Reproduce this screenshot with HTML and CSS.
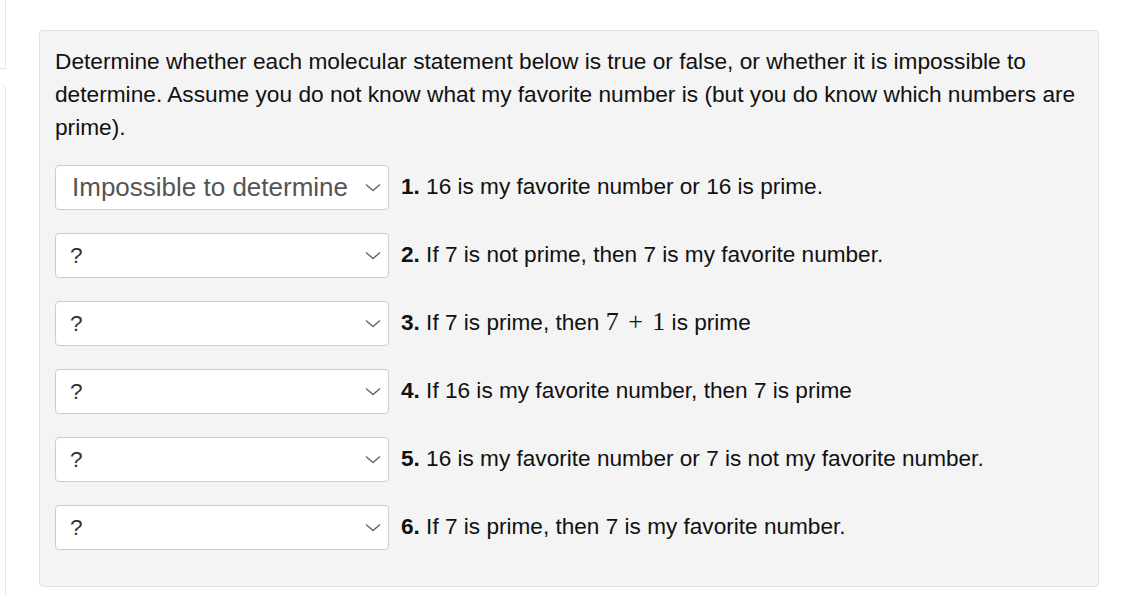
FILE: index.html
```html
<!DOCTYPE html>
<html lang="en">
<head>
    <meta charset="UTF-8">
    <meta name="viewport" content="width=device-width, initial-scale=1.0">
    <title>Molecular Statements</title>
    <link rel="stylesheet" href="styles.css">
</head>
<body>
    <div class="page">
        <!-- Sidebar edge stubs -->
        <div class="sidebar">
            <div class="side-top"></div>
            <div class="side-panel"></div>
        </div>

        <!-- Question card -->
        <div class="main">
            <div class="question-card">
                <p class="prompt">Determine whether each molecular statement below is true or false, or whether it is impossible to determine. Assume you do not know what my favorite number is (but you do know which numbers are prime).</p>

                <div class="statements">
                    <div class="statement-row">
                        <div class="select-box answered">
                            <span class="select-value">Impossible to determine</span>
                            <svg class="chevron" width="16" height="9" viewBox="0 0 16 9"><path d="M1 1.5 L8 7.5 L15 1.5" fill="none" stroke="#666" stroke-width="1.4"/></svg>
                        </div>
                        <div class="statement"><b>1.</b> 16 is my favorite number or 16 is prime.</div>
                    </div>

                    <div class="statement-row">
                        <div class="select-box">
                            <span class="select-value">?</span>
                            <svg class="chevron" width="16" height="9" viewBox="0 0 16 9"><path d="M1 1.5 L8 7.5 L15 1.5" fill="none" stroke="#666" stroke-width="1.4"/></svg>
                        </div>
                        <div class="statement"><b>2.</b> If 7 is not prime, then 7 is my favorite number.</div>
                    </div>

                    <div class="statement-row">
                        <div class="select-box">
                            <span class="select-value">?</span>
                            <svg class="chevron" width="16" height="9" viewBox="0 0 16 9"><path d="M1 1.5 L8 7.5 L15 1.5" fill="none" stroke="#666" stroke-width="1.4"/></svg>
                        </div>
                        <div class="statement"><b>3.</b> If 7 is prime, then <span class="math">7 + 1</span> is prime</div>
                    </div>

                    <div class="statement-row">
                        <div class="select-box">
                            <span class="select-value">?</span>
                            <svg class="chevron" width="16" height="9" viewBox="0 0 16 9"><path d="M1 1.5 L8 7.5 L15 1.5" fill="none" stroke="#666" stroke-width="1.4"/></svg>
                        </div>
                        <div class="statement"><b>4.</b> If 16 is my favorite number, then 7 is prime</div>
                    </div>

                    <div class="statement-row">
                        <div class="select-box">
                            <span class="select-value">?</span>
                            <svg class="chevron" width="16" height="9" viewBox="0 0 16 9"><path d="M1 1.5 L8 7.5 L15 1.5" fill="none" stroke="#666" stroke-width="1.4"/></svg>
                        </div>
                        <div class="statement"><b>5.</b> 16 is my favorite number or 7 is not my favorite number.</div>
                    </div>

                    <div class="statement-row">
                        <div class="select-box">
                            <span class="select-value">?</span>
                            <svg class="chevron" width="16" height="9" viewBox="0 0 16 9"><path d="M1 1.5 L8 7.5 L15 1.5" fill="none" stroke="#666" stroke-width="1.4"/></svg>
                        </div>
                        <div class="statement"><b>6.</b> If 7 is prime, then 7 is my favorite number.</div>
                    </div>
                </div>
            </div>
        </div>
    </div>
</body>
</html>
```

FILE: styles.css
```css
* {
    margin: 0;
    padding: 0;
    box-sizing: border-box;
}

body {
    background-color: #ffffff;
    font-family: 'Liberation Sans', Arial, Helvetica, sans-serif;
    color: #111;
    overflow: hidden;
}

.page {
    display: flex;
    height: 595px;
}

/* Edges of the neighbouring panels */
.sidebar {
    width: 6px;
    flex-shrink: 0;
    display: flex;
    flex-direction: column;
}

.side-top {
    height: 69px;
    border-right: 1px solid #e6e6e6;
    border-bottom: 1px solid #e6e6e6;
}

.side-panel {
    flex: 1;
    margin-top: 14px;
    border-right: 1px solid #e6e6e6;
    border-top: 1px solid #ececec;
    border-top-right-radius: 8px;
}

.main {
    padding: 30px 0 0 33px;
}

.question-card {
    width: 1060px;
    background-color: #f4f4f4;
    border: 1px solid #e1e1e1;
    border-radius: 4px;
    padding: 14px 20px 36px 15px;
}

.prompt {
    font-size: 22.7px;
    line-height: 33px;
    margin-bottom: 21px;
}

.statements {
    display: flex;
    flex-direction: column;
    gap: 23px;
}

.statement-row {
    display: flex;
    align-items: center;
    gap: 12px;
}

.select-box {
    width: 334px;
    height: 45px;
    flex-shrink: 0;
    display: flex;
    align-items: center;
    justify-content: space-between;
    padding: 0 7px 0 14px;
    background-color: #fff;
    border: 1px solid #cdcdcd;
    border-radius: 4px;
}

.select-value {
    font-size: 22.6px;
    color: #333;
}

.select-box.answered {
    padding-left: 16px;
}

.select-box.answered .select-value {
    font-size: 26px;
    color: #555;
}

.chevron {
    flex-shrink: 0;
}

.statement {
    font-size: 22.6px;
    line-height: 30px;
    margin-top: -2px;
}

.statement b {
    font-weight: 700;
}

.math {
    font-family: 'Liberation Serif', 'DejaVu Serif', serif;
    font-size: 1.15em;
    word-spacing: 3px;
}
```
